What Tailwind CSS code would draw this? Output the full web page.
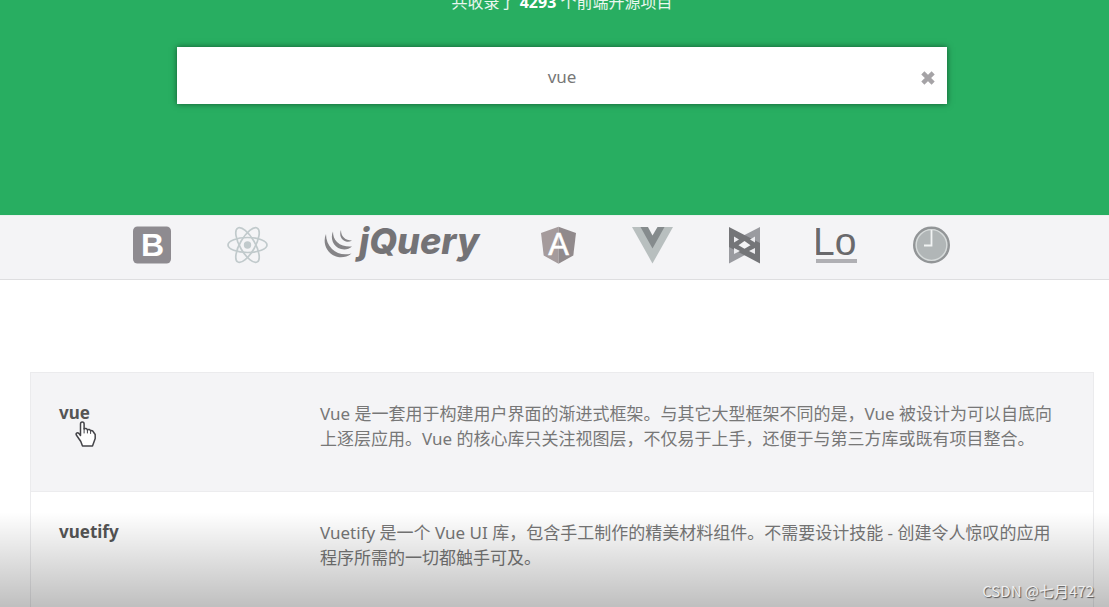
<!DOCTYPE html>
<html lang="zh-CN">
<head>
<meta charset="utf-8">
<meta name="viewport" content="width=device-width, initial-scale=1">
<title>前端开源项目</title>
<script src="https://cdn.jsdelivr.net/npm/@tailwindcss/browser@4"></script>
</head>
<body class="relative h-screen overflow-hidden bg-white font-['Noto_Sans','Noto_Sans_CJK_SC',sans-serif] text-[17px] text-[#777]">
  <header class="flex h-[215px] flex-col items-center bg-[#28ae61] pr-[15px] pl-[30px]">
    <p class="-mt-[10px] text-base leading-6 text-white/90">共收录了 <strong class="font-bold text-white">4293</strong> 个前端开源项目</p>
    <form class="relative mt-[33px] w-full max-w-[770px]">
      <input type="text" value="vue" aria-label="搜索" class="block h-[57px] w-full bg-white px-12 pt-0.5 text-center text-[17px] text-[#777] shadow-[0_0_6px_rgba(0,0,0,0.5)] outline-none">
      <button type="button" aria-label="清除" class="absolute inset-y-0 right-3 flex items-center pt-1">
        <svg class="size-3.5" viewBox="0 0 14 14" stroke="#a5a3a6" stroke-width="4.4" stroke-linecap="square"><path d="M3.4 3.4l7.2 7.2M10.6 3.4l-7.2 7.2"/></svg>
      </button>
    </form>
  </header>

  <nav class="flex h-[65px] items-start justify-center gap-14 border-y border-t-[#e9f1ee] border-b-[#dedee0] bg-[#f4f4f6] pt-2.5 pr-[57px] pl-[30px]">
    <a href="#" aria-label="Bootstrap"><svg class="h-[38px] w-[38px]" viewBox="0 0 38 38"><rect y=".5" width="38" height="37" rx="4.5" fill="#8e8b90"/><text x="19.5" y="30" text-anchor="middle" font-family="Liberation Sans" font-weight="700" font-size="32" fill="#fff">B</text></svg></a>
    <a href="#" aria-label="React"><svg class="h-[38px] w-[41px]" viewBox="0 0 41 38" fill="none" stroke="#c1cacc" stroke-width="1.7"><circle cx="20.5" cy="19" r="3.7" fill="#c1cacc" stroke="none"/><ellipse cx="20.5" cy="19" rx="19.5" ry="7.5"/><ellipse cx="20.5" cy="19" rx="19.5" ry="7.5" transform="rotate(60 20.5 19)"/><ellipse cx="20.5" cy="19" rx="19.5" ry="7.5" transform="rotate(120 20.5 19)"/></svg></a>
    <a href="#" aria-label="jQuery"><svg class="h-[38px] w-[161px]" viewBox="0 0 161 38" fill="#858487"><path d="M2 8C-2 17 3 29 14 31c5 .8 10-.5 13.500-3.500C20 29.500 13 28 8 23 4 19 2 14 2 8z"/><path d="M9 5.500C6 12 9 21 17 23c4.500 1 8 0 11-2.500C23 21 17 20 13 16c-3-3-4-6.500-4-10.500z"/><path d="M17 4c-2 5 0 10 5 11.500 2 .6 4 .2 6-1-3.500 0-6-.8-8.200-3C17.800 9.500 17 7 17 4z"/><text x="35" y="28" font-family="Inter" font-weight="800" font-style="italic" font-size="36" fill="#747376">jQuery</text></svg></a>
    <a href="#" aria-label="Angular"><svg class="h-[38px] w-[35px]" viewBox="0 0 35 38"><path d="M17.500.8L0 7l2.700 22.500 14.800 8.200V.8z" fill="#a59b9c"/><path d="M17.500.8L35 7l-2.700 22.500-14.800 8.200V.8z" fill="#918a8c"/><text x="17.500" y="28.500" text-anchor="middle" font-family="Liberation Sans" font-size="31" fill="#fff" stroke="#fff" stroke-width=".5">A</text></svg></a>
    <a href="#" aria-label="Vue"><svg class="h-[38px] w-[41px]" viewBox="0 0 41 38"><path d="M0 1h41L20.500 37.500z" fill="#b8bfbf"/><path d="M8.500 1h24l-12 21.500z" fill="#858b8d"/><path d="M16 1h9.500l-5 8.500z" fill="#f4f4f6"/></svg></a>
    <a href="#" aria-label="Backbone"><svg class="h-[38px] w-[31px]" viewBox="0 0 31 38"><path fill="#9a9ba0" d="M31 1v20L0 37.500V17z"/><path fill="#747578" d="M0 1v20l31 16.500V17z"/><path d="M5 10.500v6l5-3zM26 10.500v6l-5-3zM5 22v6l6-3zM26 22v6l-6-3z" fill="#ececef"/><path d="M15.500 15l6 4.200-6 3.500-6-3.500z" fill="#f4f4f6"/></svg></a>
    <a href="#" aria-label="Lodash"><svg class="h-[38px] w-[41px]" viewBox="0 0 41 38"><text x="-3" y="28.500" font-family="Liberation Sans" font-size="39" fill="#69696c">Lo</text><path d="M0 33h41v4H0z" fill="#b0b0b4"/></svg></a>
    <a href="#" aria-label="Moment"><svg class="h-[38px] w-[37px]" viewBox="0 0 37 38" fill="none"><circle cx="18.500" cy="19" r="17.300" fill="#b1b6b7" stroke="#929597" stroke-width="2.400"/><circle cx="18.500" cy="19" r="15.300" stroke="#d7dbdb" stroke-width="1.300"/><path d="M18.500 4v15.500H11" stroke="#f1f3f3" stroke-width="1.800"/></svg></a>
  </nav>

  <main class="mt-[92px] mr-[15px] ml-[30px] border border-[#ebebed]">
    <article class="flex min-h-[119px] border-b border-[#ececee] bg-[#f4f4f6] px-7 pt-[27px] pb-9 leading-[25px]">
      <h2 class="w-[261px] shrink-0 font-bold text-[#555]"><a href="#">vue</a></h2>
      <p class="flex-1 pt-px">Vue 是一套用于构建用户界面的渐进式框架。与其它大型框架不同的是，Vue 被设计为可以自底向<br>上逐层应用。Vue 的核心库只关注视图层，不仅易于上手，还便于与第三方库或既有项目整合。</p>
    </article>
    <article class="flex min-h-[119px] px-7 pt-[27px] pb-9 leading-[25px]">
      <h2 class="w-[261px] shrink-0 font-bold text-[#555]"><a href="#">vuetify</a></h2>
      <p class="flex-1 pt-px">Vuetify 是一个 Vue UI 库，包含手工制作的精美材料组件。不需要设计技能 - 创建令人惊叹的应用<br>程序所需的一切都触手可及。</p>
    </article>
  </main>

  <!-- hand pointer -->
  <svg class="absolute top-[421px] left-[75px] h-[27px] w-[22px]" viewBox="0 0 22 27" fill="#fff" stroke="#444449" stroke-width="1.500" stroke-linejoin="round" stroke-linecap="round"><path d="M5.500 14.500V3c0-2.600 3.600-2.600 3.600 0v5c.9-1 3-.7 3.300.8 1-.8 2.900-.4 3.200 1 1-.5 2.200 0 2.800 1.200l1.800 2.500v4L17.500 25H7.500L5.800 20.500 1.500 14.300c-1.200-2 .8-3.400 2.300-1.900z"/><path d="M9.100 7.500V12M12.400 8.800V12M15.600 9.800V12.500" stroke-width="1"/></svg>
  <div class="pointer-events-none absolute inset-x-0 bottom-0 h-[95px] bg-linear-to-b from-black/0 to-black/25"></div>
  <p class="absolute right-[15px] bottom-1 font-['Noto_Sans_CJK_SC',sans-serif] text-[15px] leading-6 text-[#eee] [text-shadow:1px_1px_1px_#555]">CSDN @七月472</p>
</body>
</html>
